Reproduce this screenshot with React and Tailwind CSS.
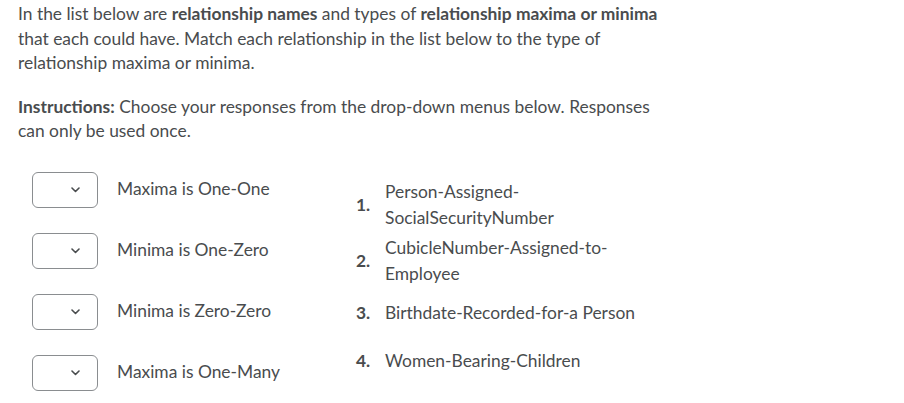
import React from 'react';

const matches = [
  'Maxima is One-One',
  'Minima is One-Zero',
  'Minima is Zero-Zero',
  'Maxima is One-Many',
];

const relationships = [
  { n: '1.', lines: ['Person-Assigned-', 'SocialSecurityNumber'], mt: 'mt-0' },
  { n: '2.', lines: ['CubicleNumber-Assigned-to-', 'Employee'], mt: 'mt-[4px]' },
  { n: '3.', lines: ['Birthdate-Recorded-for-a Person'], mt: 'mt-[13px]' },
  { n: '4.', lines: ['Women-Bearing-Children'], mt: 'mt-[22px]' },
];

const Dropdown = () => (
  <div className="w-[66px] h-[36px] rounded-[6px] border border-[#8a8d90] bg-white flex items-center justify-end pr-[17px] shrink-0">
    <svg width="9" height="6" viewBox="0 0 9 6" fill="none">
      <path d="M1 1l3.5 3.5L8 1" stroke="#494c4e" strokeWidth="1.6" strokeLinecap="round" strokeLinejoin="round" />
    </svg>
  </div>
);

export default function App() {
  return (
    <div className="bg-white w-[904px] h-[403px] overflow-hidden px-[18px] pt-[2px] text-[17.4px] leading-[24.5px] text-[#494c4e]" style={{ fontFamily: 'Lato, "Noto Sans", sans-serif' }}>
      <p className="w-[652px]">
        In the list below are <b>relationship names</b> and types of <b>relationship maxima or minima</b> that each could have. Match each relationship in the list below to the type of relationship maxima or minima.
      </p>
      <p className="w-[652px] mt-[19px]">
        <b>Instructions:</b> Choose your responses from the drop-down menus below. Responses can only be used once.
      </p>

      <div className="flex mt-[28px]">
        {/* Dropdowns + labels */}
        <div className="w-[338px] pl-[14px] flex flex-col gap-[25px]">
          {matches.map((m) => (
            <div key={m} className="flex items-center gap-[19px]">
              <Dropdown />
              <span>{m}</span>
            </div>
          ))}
        </div>

        {/* Numbered relationships */}
        <div className="flex flex-col pt-[7px] leading-[26px]">
          {relationships.map((r) => (
            <div key={r.n} className={`flex items-center ${r.mt}`}>
              <span className="w-[29px] font-bold">{r.n}</span>
              <div>
                {r.lines.map((l) => (
                  <div key={l}>{l}</div>
                ))}
              </div>
            </div>
          ))}
        </div>
      </div>
    </div>
  );
}
